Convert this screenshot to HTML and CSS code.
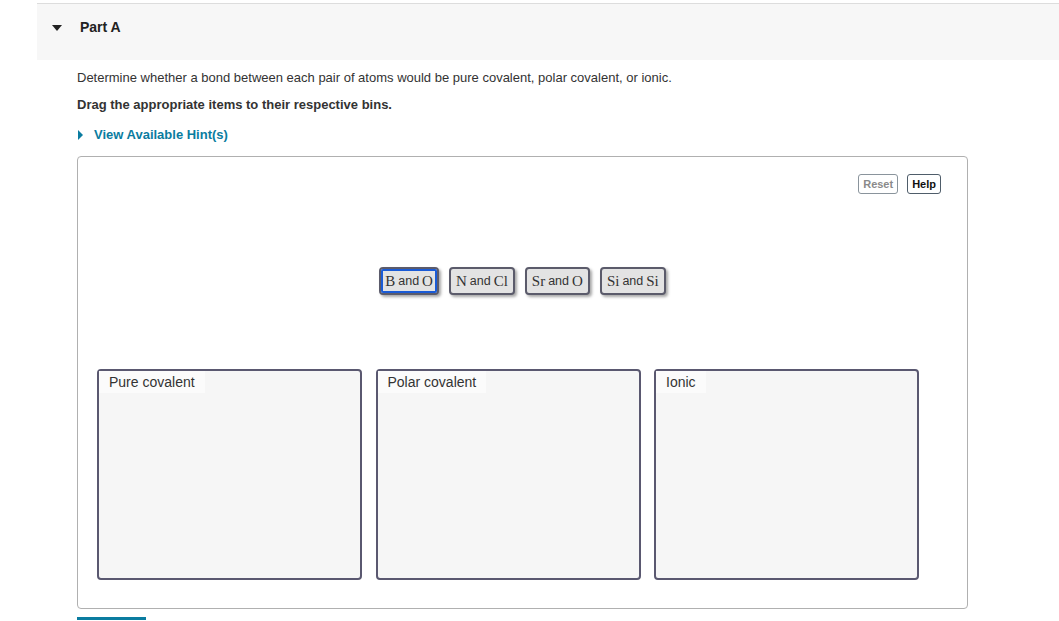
FILE: index.html
```html
<!DOCTYPE html>
<html lang="en">
<head>
    <meta charset="UTF-8">
    <title>Part A</title>
    <link rel="stylesheet" href="styles.css">
</head>
<body>

    <div class="part-header">
        <span class="caret-down"></span>
        <span class="part-title">Part A</span>
    </div>

    <div class="part-body">
        <p class="prompt">Determine whether a bond between each pair of atoms would be pure covalent, polar covalent, or ionic.</p>
        <p class="prompt strong">Drag the appropriate items to their respective bins.</p>
        <div class="hint-link">
            <span class="caret-right"></span>
            <span>View Available Hint(s)</span>
        </div>

        <div class="dnd-box">
            <div class="toolbar">
                <button class="tool-btn disabled">Reset</button>
                <button class="tool-btn">Help</button>
            </div>

            <div class="items">
                <div class="item focused"><span class="el">B</span> and <span class="el">O</span></div>
                <div class="item"><span class="el">N</span> and <span class="el">Cl</span></div>
                <div class="item"><span class="el">Sr</span> and <span class="el">O</span></div>
                <div class="item"><span class="el">Si</span> and <span class="el">Si</span></div>
            </div>

            <div class="bins">
                <div class="bin"><span class="bin-label">Pure covalent</span></div>
                <div class="bin"><span class="bin-label">Polar covalent</span></div>
                <div class="bin"><span class="bin-label">Ionic</span></div>
            </div>
        </div>

        <div class="submit-edge"></div>
    </div>

</body>
</html>
```

FILE: styles.css
```css
body {
    margin: 0;
    font-family: 'Liberation Sans', Arial, sans-serif;
    color: #333333;
    background-color: #ffffff;
}

/* Collapsible part header */
.part-header {
    margin: 3px 0 0 37px;
    height: 57px;
    box-sizing: border-box;
    padding-top: 15px;
    border-top: 1px solid #dddddd;
    background-color: #f7f7f7;
    display: flex;
    align-items: flex-start;
}

.caret-down {
    width: 0;
    height: 0;
    margin: 6px 0 0 15px;
    border-left: 5px solid transparent;
    border-right: 5px solid transparent;
    border-top: 6px solid #222222;
}

.part-title {
    margin-left: 18px;
    font-size: 14px;
    line-height: 17px;
    font-weight: bold;
    color: #222222;
}

.part-body {
    padding-left: 77px;
}

.prompt {
    margin: 10px 0 0;
    font-size: 13px;
    line-height: 16px;
}

.prompt.strong {
    margin-top: 11px;
    font-weight: bold;
}

.hint-link {
    margin-top: 14px;
    display: flex;
    align-items: center;
    font-size: 13px;
    line-height: 16px;
    font-weight: bold;
    color: #0a7ca0;
}

.caret-right {
    width: 0;
    height: 0;
    margin: 0 11px 0 1px;
    border-top: 5px solid transparent;
    border-bottom: 5px solid transparent;
    border-left: 5px solid #0a7ca0;
}

/* Drag and drop area */
.dnd-box {
    margin-top: 13px;
    width: 889px;
    height: 451px;
    border: 1px solid #b0b0b0;
    border-radius: 4px;
}

.toolbar {
    display: flex;
    justify-content: flex-end;
    gap: 9px;
    padding: 17px 26px 0 0;
}

.tool-btn {
    height: 20px;
    padding: 0 4px;
    font-family: 'Liberation Sans', Arial, sans-serif;
    font-size: 11px;
    font-weight: bold;
    color: #111111;
    background-color: #ffffff;
    border: 1px solid #4f5d6a;
    border-radius: 3px;
}

.tool-btn.disabled {
    color: #8a8a8a;
    border-color: #8a949c;
}

.items {
    display: flex;
    justify-content: center;
    gap: 10px;
    margin-top: 73px;
}

.item {
    height: 24px;
    padding: 0 5px;
    display: flex;
    align-items: center;
    gap: 3px;
    font-size: 12.5px;
    color: #333333;
    background-color: #e3e3e3;
    border: 2px solid #5b5b6b;
    border-radius: 4px;
    box-shadow: 2px 2px 3px rgba(0, 0, 0, 0.35);
}

.item .el {
    font-family: 'Liberation Serif', 'Times New Roman', serif;
    font-size: 15px;
}

.item.focused {
    padding: 0 4px;
    outline: 2px solid #1a5bd6;
    outline-offset: -4px;
}

.bins {
    display: flex;
    gap: 13.5px;
    margin: 74px 0 0 19px;
}

.bin {
    width: 261px;
    height: 207px;
    background-color: #f6f6f6;
    border: 2px solid #5a5870;
    border-radius: 4px;
}

.bin-label {
    display: inline-block;
    padding: 3px 10px 2px;
    font-size: 14px;
    line-height: 17px;
    color: #333333;
    background-color: #fbfbfb;
}

.submit-edge {
    margin-top: 8px;
    width: 69px;
    height: 3px;
    background-color: #0a7ca0;
}
```
